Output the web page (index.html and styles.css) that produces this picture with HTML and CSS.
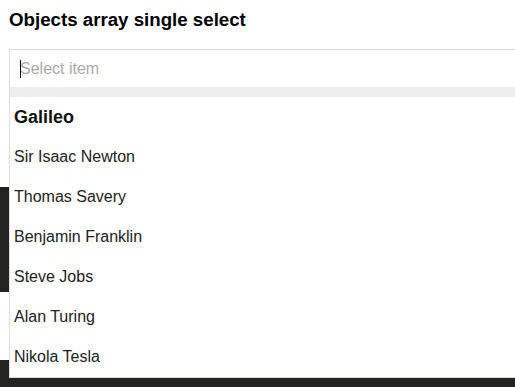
FILE: index.html
```html
<!DOCTYPE html>
<html>
<head>
<meta charset="utf-8">
<link rel="stylesheet" href="styles.css">
</head>
<body>
<h1 class="title">Objects array single select</h1>
<div class="select">
  <div class="control"><span class="caret"></span><span class="placeholder">Select item</span></div>
  <div class="menu">
    <div class="menu-bar"></div>
    <ul class="options">
      <li class="option option-active">Galileo</li>
      <li class="option">Sir Isaac Newton</li>
      <li class="option">Thomas Savery</li>
      <li class="option">Benjamin Franklin</li>
      <li class="option">Steve Jobs</li>
      <li class="option">Alan Turing</li>
      <li class="option">Nikola Tesla</li>
    </ul>
  </div>
</div>
<div class="dark dark-one"></div>
<div class="dark dark-two"></div>
</body>
</html>
```
FILE: styles.css
```css
html, body {
  margin: 0;
  padding: 0;
  overflow: hidden;
  background: #fff;
  font-family: "Liberation Sans", Arial, sans-serif;
  color: #222;
}
.title {
  margin: 0;
  padding: 10px 9px 0;
  font-size: 18.7px;
  line-height: 20px;
  font-weight: bold;
  color: #000;
}
.select {
  position: relative;
  margin: 19px 0 0 9px;
  width: 600px;
  z-index: 2;
}
.control {
  box-sizing: border-box;
  height: 38px;
  border: 1px solid #ddd;
  border-bottom: none;
  padding-left: 10px;
  line-height: 37px;
  font-size: 16px;
  background: #fff;
  display: flex;
  align-items: center;
}
.caret {
  display: inline-block;
  width: 1px;
  height: 18px;
  background: #000;
  margin-right: -1px;
}
.placeholder {
  color: #aaa;
}
.menu {
  position: absolute;
  top: 100%;
  left: 0;
  right: 0;
  background: #fff;
  border: 1px solid #ddd;
  border-top: none;
}
.menu-bar {
  height: 10px;
  background: #eee;
}
.options {
  list-style: none;
  margin: 0;
  padding: 0;
}
.option {
  height: 40px;
  line-height: 40px;
  padding-left: 4px;
  font-size: 16px;
  color: #222;
}
.option-active {
  font-size: 18px;
  font-weight: bold;
  color: #111;
}
.dark {
  background: #23231f;
}
.dark-one {
  margin-top: 100px;
  height: 105px;
}
.dark-two {
  margin-top: 68px;
  height: 200px;
}
```
